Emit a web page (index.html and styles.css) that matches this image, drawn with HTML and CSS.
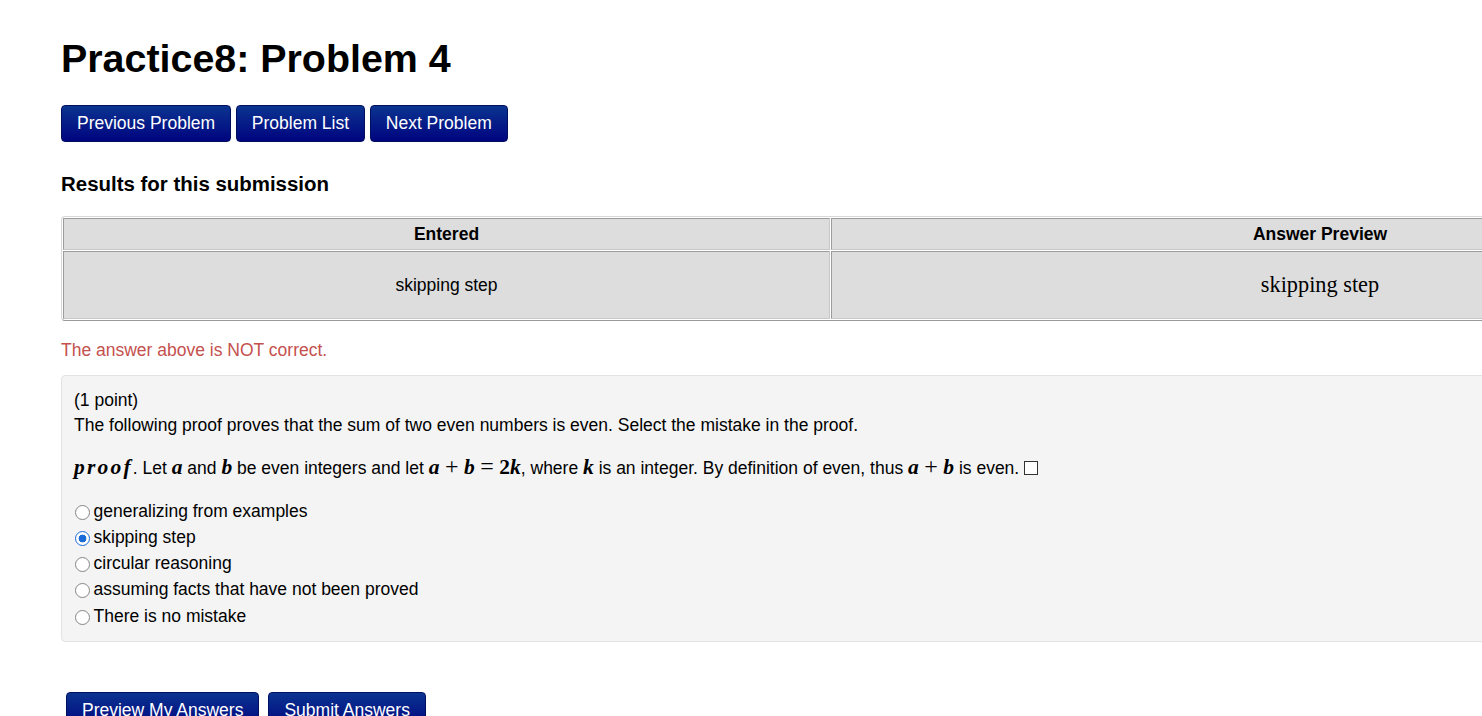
FILE: index.html
```html
<!DOCTYPE html>
<html lang="en">
<head>
<meta charset="utf-8">
<title>Practice8: Problem 4</title>
<link rel="stylesheet" href="styles.css">
</head>
<body>
<div class="page">
  <h1 class="title">Practice8: Problem 4</h1>
  <div class="nav">
    <a class="btn" href="#">Previous Problem</a>
    <a class="btn" href="#">Problem List</a>
    <a class="btn" href="#">Next Problem</a>
  </div>

  <h3 class="results-head">Results for this submission</h3>
  <table class="attempt">
    <colgroup><col class="c1"><col class="c2"></colgroup>
    <tr><th>Entered</th><th>Answer Preview</th></tr>
    <tr><td>skipping step</td><td class="preview">skipping step</td></tr>
  </table>
  <div class="error">The answer above is NOT correct.</div>

  <div class="problem">
    <div class="line">(1 point)</div>
    <div class="line">The following proof proves that the sum of two even numbers is even. Select the mistake in the proof.</div>
    <p class="proof"><span class="math proofword">proof</span>. Let <span class="math"><i>a</i></span> and <span class="math"><i>b</i></span> be even integers and let <span class="math"><i>a</i><span class="mo">+</span><i>b</i><span class="mo">=</span>2<i>k</i></span>, where <span class="math"><i>k</i></span> is an integer. By definition of even, thus <span class="math"><i>a</i><span class="mo">+</span><i>b</i></span> is even. <span class="qed"></span></p>
    <div class="options">
      <label class="opt"><input type="radio" name="ans">generalizing from examples</label>
      <label class="opt"><input type="radio" name="ans" checked>skipping step</label>
      <label class="opt"><input type="radio" name="ans">circular reasoning</label>
      <label class="opt"><input type="radio" name="ans">assuming facts that have not been proved</label>
      <label class="opt"><input type="radio" name="ans">There is no mistake</label>
    </div>
  </div>

  <div class="submit">
    <a class="btn" href="#">Preview My Answers</a>
    <a class="btn" href="#">Submit Answers</a>
  </div>
</div>
</body>
</html>
```

FILE: styles.css
```css
html, body {
  margin: 0;
  padding: 0;
  overflow: hidden;
  background: #ffffff;
}
body {
  font-family: "Liberation Sans", Arial, sans-serif;
  font-size: 17.5px;
  line-height: 25px;
  color: #000;
}
.page {
  padding: 36px 0 0 61px;
}
.title {
  font-size: 39.4px;
  line-height: 44px;
  font-weight: bold;
  margin: 0 0 25px 0;
}
.nav {
  display: flex;
  gap: 4.7px;
}
.btn {
  display: inline-block;
  padding: 5px 15px;
  border: 1px solid #00105e;
  border-radius: 4px;
  background: linear-gradient(#0b3490, #00047f);
  color: #ffffff;
  text-decoration: none;
  font-size: 17.5px;
  line-height: 25px;
  white-space: nowrap;
}
.results-head {
  font-size: 20.45px;
  line-height: 25px;
  font-weight: bold;
  margin: 28.5px 0 20.5px 0;
}
.attempt {
  table-layout: fixed;
  width: 1750px;
  border-collapse: separate;
  border-spacing: 1px;
  border: 1px solid;
  border-color: #d8d8d8 #9a9a9a #9a9a9a #d8d8d8;
  border-radius: 4px;
}
.attempt .c1 { width: 767px; }
.attempt th, .attempt td {
  background: #dddddd;
  border: 1px solid;
  border-color: #9c9c9c #c8c8c8 #c8c8c8 #9c9c9c;
  text-align: center;
}
.attempt th {
  font-weight: bold;
  padding: 2.5px 5px;
}
.attempt td {
  padding: 20.5px 5px;
  vertical-align: top;
}
.attempt td.preview {
  font-family: "Liberation Serif", "Times New Roman", serif;
  font-size: 22.3px;
  padding: 19.5px 5px 21.5px 5px;
}
.error {
  color: #c4514e;
  margin-top: 17px;
}
.problem {
  margin-top: 12px;
  width: 1700px;
  background: #f4f4f4;
  border: 1px solid #e3e3e3;
  border-radius: 4px;
  padding: 11.5px 12px 12.5px 12px;
}
.proof {
  margin: 16px 0 17px 0;
}
.math {
  font-family: "Liberation Serif", "Times New Roman", serif;
  font-size: 21.5px;
  font-weight: bold;
}
.math i {
  font-style: italic;
}
.proofword {
  font-style: italic;
  letter-spacing: 2.2px;
}
.mo {
  font-size: 24px;
  font-weight: normal;
  margin: 0 5.5px;
}
.qed {
  display: inline-block;
  width: 12px;
  height: 12px;
  border: 1px solid #333;
  background: #fff;
  vertical-align: -1px;
}
.options {
  display: flex;
  flex-direction: column;
}
.opt {
  display: block;
  line-height: 26.25px;
}
.opt input {
  appearance: none;
  -webkit-appearance: none;
  box-sizing: border-box;
  width: 15px;
  height: 15px;
  margin: 0 4px 0 0.5px;
  border: 1.3px solid #858585;
  border-radius: 50%;
  background: #ffffff;
  vertical-align: -3px;
}
.opt input:checked {
  border: 1.5px solid #1a6bd8;
  background: radial-gradient(circle, #1a6bd8 0 3.6px, #ffffff 4.2px);
}
.submit {
  display: flex;
  gap: 9px;
  margin: 50px 0 0 5px;
}
```
